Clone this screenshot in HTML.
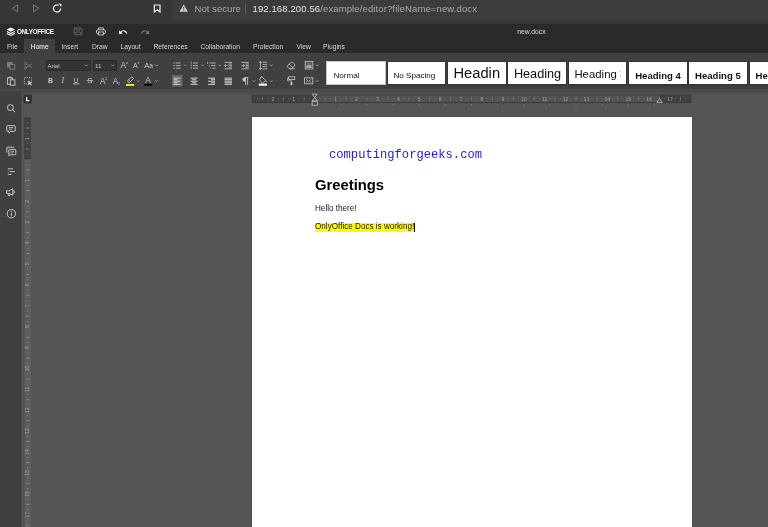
<!DOCTYPE html>
<html><head><meta charset="utf-8"><title>new.docx</title>
<style>
*{box-sizing:border-box;margin:0;padding:0}
html,body{width:768px;height:527px;overflow:hidden;background:#555;font-family:"Liberation Sans",sans-serif;}
#wrap{position:absolute;left:0;top:0;width:768px;height:527px;overflow:hidden;will-change:transform;filter:blur(0.45px)}
.abs{position:absolute}
.t{position:absolute;white-space:nowrap;line-height:1}
#chrome{left:0;top:0;width:768px;height:24px;background:#363637}
#urlbar{left:172px;top:0;width:596px;height:20px;background:#3c3c3d;border-radius:0 0 0 4px}
#title{left:0;top:23.5px;width:768px;height:30px;background:#2a2a2a}
#hometab{left:24px;top:39px;width:31px;height:15px;background:#404040}
#toolbar{left:0;top:53px;width:768px;height:36px;background:#404040}
#tbline{left:0;top:89px;width:768px;height:2.4px;background:#4a4a4a}
#tbsh{left:22px;top:91.4px;width:746px;height:4px;background:linear-gradient(#474747,#555)}
#left{left:0;top:91px;width:22px;height:436px;background:#404040;border-right:1px solid #4a4a4a}
#page{left:251.8px;top:116.7px;width:440px;height:420px;background:#fff;box-shadow:0 0 0 0.5px #444}
.tab{position:absolute;top:43px;font-size:6.7px;color:#d6d6d6;line-height:8px;white-space:nowrap}
.sty{position:absolute;top:61.8px;height:22.3px;width:58px;background:#fff;box-shadow:0 0 0 0.9px #353535,0 1.6px 0 0.2px #393939}
.sty span{position:absolute;white-space:nowrap;color:#111;line-height:1}
.cb{position:absolute;background:#333;border:1px solid #2c2c2c;border-radius:1px}
svg{position:absolute;left:0;top:0;overflow:visible}
</style></head><body>
<div id="wrap">
<div class="abs" id="chrome"></div>
<div class="abs" id="urlbar"></div>
<div class="t" style="left:194.5px;top:3.6px;font-size:9.5px;color:#a8a8aa;letter-spacing:0.05px">Not secure</div>
<div class="abs" style="left:245px;top:4px;width:1px;height:10px;background:#5c5c5e"></div>
<div class="t" style="left:252.5px;top:3.6px;font-size:9.5px;color:#e6e6e6;letter-spacing:0.12px">192.168.200.56<span style="color:#a8a8aa">/example/editor?fileName=new.docx</span></div>
<div class="abs" id="title"></div>
<div class="t" style="left:17px;top:29px;font-size:6.4px;font-weight:bold;color:#f4f4f4;letter-spacing:-0.4px">ONLYOFFICE</div>
<div class="t" style="left:517.3px;top:28.8px;font-size:6.8px;color:#d8d8d8">new.docx</div>
<div class="abs" id="hometab"></div>
<div class="tab" style="left:7px;color:#d6d6d6">File</div>
<div class="tab" style="left:30.8px;color:#fff">Home</div>
<div class="tab" style="left:61.5px;color:#d6d6d6">Insert</div>
<div class="tab" style="left:92px;color:#d6d6d6">Draw</div>
<div class="tab" style="left:120.6px;color:#d6d6d6">Layout</div>
<div class="tab" style="left:153.5px;color:#d6d6d6">References</div>
<div class="tab" style="left:200.5px;color:#d6d6d6">Collaboration</div>
<div class="tab" style="left:253px;color:#d6d6d6">Protection</div>
<div class="tab" style="left:296.5px;color:#d6d6d6">View</div>
<div class="tab" style="left:323px;color:#d6d6d6">Plugins</div>
<div class="abs" id="toolbar"></div>
<div class="abs" id="tbline"></div>
<div class="abs" id="tbsh"></div>
<div class="abs" id="left"></div>
<div class="abs" id="page"></div>
<div class="cb" style="left:45.5px;top:60px;width:45px;height:10.6px"></div>
<div class="t" style="left:47.4px;top:62.9px;font-size:6.1px;color:#c8c8c8">Arial</div>
<div class="cb" style="left:93px;top:60px;width:23.5px;height:10.6px"></div>
<div class="t" style="left:95px;top:62.9px;font-size:6.1px;color:#c8c8c8">11</div>
<div class="abs" style="left:325.7px;top:60.7px;width:60.5px;height:24.6px;background:#fff;border:1px solid #c4c4c4"></div>
<div class="t" style="left:333.40px;top:71.64px;font-size:8.1px;color:#1c1c1c;font-weight:normal;">Normal</div>
<div class="sty" style="left:387.8px;width:57.5px"><div style="position:absolute;left:0;top:0;height:23px;width:52.3px;overflow:hidden"><span style="left:5.60px;top:9.94px;font-size:8.1px;font-weight:normal">No Spacing</span></div></div>
<div class="sty" style="left:448px;width:57.5px"><div style="position:absolute;left:0;top:0;height:23px;width:52.3px;overflow:hidden"><span style="left:5.50px;top:4.36px;font-size:14.7px;font-weight:normal">Heading 1</span></div></div>
<div class="sty" style="left:508.4px;width:57.5px"><div style="position:absolute;left:0;top:0;height:23px;width:52.3px;overflow:hidden"><span style="left:5.50px;top:6.05px;font-size:12.7px;font-weight:normal">Heading 2</span></div></div>
<div class="sty" style="left:568.8px;width:57.5px"><div style="position:absolute;left:0;top:0;height:23px;width:52.3px;overflow:hidden"><span style="left:5.60px;top:7.15px;font-size:11.4px;font-weight:normal">Heading 3</span></div></div>
<div class="sty" style="left:629px;width:57.5px"><div style="position:absolute;left:0;top:0;height:23px;width:52.3px;overflow:hidden"><span style="left:6.20px;top:8.72px;font-size:9.55px;font-weight:bold">Heading 4</span></div></div>
<div class="sty" style="left:689.2px;width:57.5px"><div style="position:absolute;left:0;top:0;height:23px;width:52.3px;overflow:hidden"><span style="left:5.90px;top:8.72px;font-size:9.55px;font-weight:bold">Heading 5</span></div></div>
<div class="sty" style="left:749.5px;width:20px"><div style="position:absolute;left:0;top:0;height:23px;width:20px;overflow:hidden"><span style="left:6.00px;top:8.72px;font-size:9.55px;font-weight:bold">Heading 6</span></div></div>
<div class="t" style="left:329px;top:149.2px;font-family:'Liberation Mono',monospace;font-size:12.15px;color:#2323cc">computingforgeeks.com</div>
<div class="t" style="left:315px;top:178.2px;font-size:14.8px;font-weight:bold;color:#000">Greetings</div>
<div class="t" style="left:315px;top:205.4px;font-size:8.15px;color:#1a1a1a">Hello there!</div>
<div class="abs" style="left:315px;top:222.5px;width:99.3px;height:9.3px;background:#ffff0a"></div>
<div class="t" style="left:315px;top:223.1px;font-size:8.15px;color:#1a1a1a">OnlyOffice Docs is working!</div>
<div class="abs" style="left:414px;top:222.5px;width:1px;height:9.3px;background:#000"></div>
<svg width="768" height="527" viewBox="0 0 768 527" fill="none" stroke-linecap="butt">
<path d="M17.7 4.8 L12.3 8.3 L17.7 11.8 Z" stroke="#808082" stroke-width="0.9"/>
<path d="M33.6 4.8 L39 8.3 L33.6 11.8 Z" stroke="#808082" stroke-width="0.9"/>
<path d="M60.6 8.4 A3.6 3.6 0 1 1 58.8 5.3" stroke="#e4e4e4" stroke-width="1.3"/>
<path d="M58.6 3.6 L61.6 3.9 L61.3 7 Z" fill="#e4e4e4"/>
<path d="M154.4 5 H160 V12 L157.2 9.8 L154.4 12 Z" stroke="#ececec" stroke-width="1.2"/>
<path d="M183.7 4.6 L187.9 11.8 H179.5 Z" fill="#cfcfd0"/>
<path d="M183.7 6.9 V9.6 M183.7 10.2 V11" stroke="#3e3e41" stroke-width="0.9"/>
<path d="M10.8 27.4 L15 29.6 L10.8 31.8 L6.6 29.6 Z" fill="#f4f4f4"/>
<path d="M6.8 31.6 L10.8 33.6 L14.8 31.6 M6.8 33.4 L10.8 35.4 L14.8 33.4" stroke="#f0f0f0" stroke-width="1.15"/>
<g stroke="#6a6a6a" stroke-width="0.8"><path d="M74.2 27.9 H80.5 L82 29.4 V34.8 H74.2 Z"/><path d="M76 27.9 V30 H80 V27.9 M75.8 34.8 V32 H80.4 V34.8"/></g>
<g stroke="#cfcfcf" stroke-width="0.9"><rect x="96.5" y="29.8" width="8.8" height="3.8" rx="1"/><path d="M98.4 29.8 V27.9 H103.4 V29.8"/><rect x="98.4" y="32" width="5" height="2.9" fill="#2a2a2a"/></g>
<path d="M120.6 32.6 C121.5 30.3 125.3 29.6 126.8 33.6" stroke="#f2f2f2" stroke-width="1.2"/><path d="M119 30.3 L119.2 34.2 L122.8 33.4 Z" fill="#f2f2f2"/>
<path d="M147.6 32.6 C146.7 30.3 142.9 29.6 141.4 33.6" stroke="#7a7a7a" stroke-width="1.2"/><path d="M149.2 30.3 L149 34.2 L145.4 33.4 Z" fill="#7a7a7a"/>
<g stroke="#7c7c7c" stroke-width="0.9"><rect x="7.5" y="62.4" width="4.6" height="4.6" fill="#7c7c7c"/><rect x="10" y="64.4" width="4.8" height="4.8" fill="#404040"/></g>
<g stroke="#7c7c7c" stroke-width="0.8"><circle cx="25.4" cy="63.6" r="1.2"/><circle cx="25.4" cy="67.8" r="1.2"/><path d="M26.5 64.2 L32 67.6 M26.5 67.2 L32 63.8"/></g>
<path d="M85.00 64.70 L86.3 66.00 L87.60 64.70" stroke="#b4b4b4" stroke-width="0.75"/>
<path d="M111.30 64.70 L112.6 66.00 L113.90 64.70" stroke="#b4b4b4" stroke-width="0.75"/>
<text x="120.4" y="67.8" font-family="Liberation Sans, sans-serif" font-size="8.4" font-weight="normal" font-style="normal" fill="#c8c8c8" stroke="none" >A</text>
<path d="M125.8 63.4 L127 62 L128.2 63.4 Z" fill="#c8c8c8"/>
<text x="133" y="67.8" font-family="Liberation Sans, sans-serif" font-size="7" font-weight="normal" font-style="normal" fill="#c8c8c8" stroke="none" >A</text>
<path d="M137.4 62.4 L138.5 63.7 L139.6 62.4 Z" fill="#c8c8c8"/>
<text x="144.2" y="67.8" font-family="Liberation Sans, sans-serif" font-size="7.6" font-weight="normal" font-style="normal" fill="#c8c8c8" stroke="none" >A</text>
<text x="149.2" y="67.8" font-family="Liberation Sans, sans-serif" font-size="6.6" font-weight="normal" font-style="normal" fill="#c8c8c8" stroke="none" >a</text>
<path d="M155.30 64.70 L156.6 66.00 L157.90 64.70" stroke="#b4b4b4" stroke-width="0.75"/>
<g stroke="#c8c8c8" stroke-width="0.9"><rect x="7.4" y="78" width="5.2" height="6.2"/><path d="M8.8 78 V77.2 H11.2 V78" /><rect x="10.3" y="79.8" width="4.6" height="5.4" fill="#404040"/></g>
<g stroke="#c8c8c8" stroke-width="0.8"><rect x="24.4" y="77.6" width="6.8" height="6.4" stroke-dasharray="1.2 1"/><path d="M28 80.4 L28.4 85.4 L29.7 84.2 L31.2 85.6 L31.9 84.9 L30.5 83.6 L32 82.8 Z" fill="#c8c8c8" stroke="none"/></g>
<text x="48" y="83.2" font-family="Liberation Sans, sans-serif" font-size="6.9" font-weight="bold" font-style="normal" fill="#c8c8c8" stroke="none" >B</text>
<text x="61.4" y="83.2" font-family="Liberation Serif, serif" font-size="7.8" font-style="italic" fill="#c8c8c8" stroke="none">I</text>
<text x="73.6" y="82.7" font-family="Liberation Sans, sans-serif" font-size="7" font-weight="normal" font-style="normal" fill="#c8c8c8" stroke="none" >U</text>
<path d="M73 83.9 H79.4" stroke="#c8c8c8" stroke-width="0.8"/>
<text x="87.6" y="83.3" font-family="Liberation Sans, sans-serif" font-size="7.4" font-weight="normal" font-style="normal" fill="#c8c8c8" stroke="none" >S</text>
<path d="M86.6 80.7 H93.2" stroke="#c8c8c8" stroke-width="0.8"/>
<text x="100" y="83.8" font-family="Liberation Sans, sans-serif" font-size="8.2" font-weight="normal" font-style="normal" fill="#c8c8c8" stroke="none" >A</text>
<text x="105.3" y="80" font-family="Liberation Sans, sans-serif" font-size="3.6" font-weight="normal" font-style="normal" fill="#c8c8c8" stroke="none" >2</text>
<text x="112.8" y="83.8" font-family="Liberation Sans, sans-serif" font-size="8.2" font-weight="normal" font-style="normal" fill="#c8c8c8" stroke="none" >A</text>
<text x="118.2" y="84.6" font-family="Liberation Sans, sans-serif" font-size="3.6" font-weight="normal" font-style="normal" fill="#c8c8c8" stroke="none" >2</text>
<path d="M128.2 82.4 L127.6 80.6 L131.8 76.8 L133.6 78.4 L129.6 82.4 Z M128.6 80 L130.4 81.6" stroke="#c8c8c8" stroke-width="0.8"/>
<rect x="126" y="83.9" width="8.2" height="2.1" fill="#e6e600"/>
<path d="M136.90 80.40 L138.2 81.70 L139.50 80.40" stroke="#b4b4b4" stroke-width="0.75"/>
<text x="145.3" y="83" font-family="Liberation Sans, sans-serif" font-size="8.4" font-weight="normal" font-style="normal" fill="#c8c8c8" stroke="none" >A</text>
<rect x="144.4" y="83.9" width="7.8" height="2.1" fill="#000"/>
<path d="M155.10 80.40 L156.4 81.70 L157.70 80.40" stroke="#b4b4b4" stroke-width="0.75"/>
<path d="M175.6 63 H180.6 M175.6 65.6 H180.6 M175.6 68.2 H180.6" stroke="#c8c8c8" stroke-width="0.8"/>
<rect x="173.4" y="62.5" width="1.1" height="1" fill="#c8c8c8"/>
<rect x="173.4" y="65.1" width="1.1" height="1" fill="#c8c8c8"/>
<rect x="173.4" y="67.7" width="1.1" height="1" fill="#c8c8c8"/>
<path d="M184.10 64.60 L185.4 65.90 L186.70 64.60" stroke="#b4b4b4" stroke-width="0.75"/>
<path d="M193 63 H198 M193 65.6 H198 M193 68.2 H198" stroke="#c8c8c8" stroke-width="0.8"/>
<path d="M191.2 61.8 V69.4" stroke="#c8c8c8" stroke-width="0.7" stroke-dasharray="1.8 0.8"/>
<path d="M201.30 64.60 L202.6 65.90 L203.90 64.60" stroke="#b4b4b4" stroke-width="0.75"/>
<path d="M209.6 63 H215.6" stroke="#c8c8c8" stroke-width="0.8"/>
<path d="M211.2 65.6 H215.6" stroke="#c8c8c8" stroke-width="0.8"/>
<path d="M212.6 68.2 H215.6" stroke="#c8c8c8" stroke-width="0.8"/>
<path d="M207.6 62 V64 M209.4 65.2 V66.4 M210.8 67.8 V68.8" stroke="#c8c8c8" stroke-width="0.7"/>
<path d="M218.50 64.60 L219.8 65.90 L221.10 64.60" stroke="#b4b4b4" stroke-width="0.75"/>
<g stroke="#c8c8c8" stroke-width="0.8"><path d="M224.6 62.4 H232 M224.6 68.8 H232 M228.6 64 H232 M228.6 65.6 H232 M228.6 67.2 H232"/><path d="M224.4 65.6 H227.6 M226 64.2 L224.5 65.6 L226 67" stroke-width="0.7"/></g>
<g stroke="#c8c8c8" stroke-width="0.8"><path d="M241.4 62.4 H248.8 M241.4 68.8 H248.8 M245.4 64 H248.8 M245.4 65.6 H248.8 M245.4 67.2 H248.8"/><path d="M241.2 65.6 H244.4 M243 64.2 L244.5 65.6 L243 67" stroke-width="0.7"/></g>
<path d="M262.6 62.2 H267.2 M262.6 64.4 H267.2 M262.6 66.6 H267.2 M262.6 68.8 H267.2" stroke="#c8c8c8" stroke-width="0.8"/>
<path d="M260.4 61.4 V69.4 M259 62.8 L260.4 61.2 L261.8 62.8 M259 68 L260.4 69.6 L261.8 68" stroke="#c8c8c8" stroke-width="0.8"/>
<path d="M269.90 64.60 L271.2 65.90 L272.50 64.60" stroke="#b4b4b4" stroke-width="0.75"/>
<path d="M289.4 68.8 L287.6 67 Q287 66.2 287.8 65.4 L291 62.4 Q291.8 61.8 292.6 62.4 L294.6 64.2 Q295.2 65 294.6 65.8 L291.6 68.8 Z M289.4 68.8 H294.8 M289.2 64.2 L292.8 67.6" stroke="#c8c8c8" stroke-width="0.8"/>
<rect x="305.2" y="61.4" width="7.6" height="7.6" stroke="#c8c8c8" stroke-width="0.8"/><rect x="306.4" y="65.2" width="5.2" height="2.8" fill="#b0b0b0"/><rect x="306.4" y="62.6" width="5.2" height="2.6" fill="#6c6c6c"/>
<path d="M315.90 64.60 L317.2 65.90 L318.50 64.60" stroke="#b4b4b4" stroke-width="0.75"/>
<rect x="172" y="75" width="10.6" height="11.4" fill="#666"/>
<rect x="173.6" y="77.6" width="7" height="1.1" fill="#c4c4c4"/>
<rect x="173.6" y="79.14999999999999" width="4" height="1.1" fill="#c4c4c4"/>
<rect x="173.6" y="80.69999999999999" width="7" height="1.1" fill="#c4c4c4"/>
<rect x="173.6" y="82.25" width="4" height="1.1" fill="#c4c4c4"/>
<rect x="173.6" y="83.8" width="7" height="1.1" fill="#c4c4c4"/>
<rect x="190.6" y="77.6" width="7" height="1.1" fill="#c4c4c4"/>
<rect x="192.1" y="79.14999999999999" width="4" height="1.1" fill="#c4c4c4"/>
<rect x="190.6" y="80.69999999999999" width="7" height="1.1" fill="#c4c4c4"/>
<rect x="192.1" y="82.25" width="4" height="1.1" fill="#c4c4c4"/>
<rect x="190.6" y="83.8" width="7" height="1.1" fill="#c4c4c4"/>
<rect x="208" y="77.6" width="7" height="1.1" fill="#c4c4c4"/>
<rect x="211" y="79.14999999999999" width="4" height="1.1" fill="#c4c4c4"/>
<rect x="208" y="80.69999999999999" width="7" height="1.1" fill="#c4c4c4"/>
<rect x="211" y="82.25" width="4" height="1.1" fill="#c4c4c4"/>
<rect x="208" y="83.8" width="7" height="1.1" fill="#c4c4c4"/>
<rect x="224.6" y="77.6" width="7.4" height="1.1" fill="#c4c4c4"/>
<rect x="224.6" y="79.14999999999999" width="7.4" height="1.1" fill="#c4c4c4"/>
<rect x="224.6" y="80.69999999999999" width="7.4" height="1.1" fill="#c4c4c4"/>
<rect x="224.6" y="82.25" width="7.4" height="1.1" fill="#c4c4c4"/>
<rect x="224.6" y="83.8" width="7.4" height="1.1" fill="#c4c4c4"/>
<path d="M245.4 77.6 H248.4 M245.6 77.6 V85 M247.6 77.6 V85" stroke="#c8c8c8" stroke-width="0.8"/><path d="M245.6 77.2 Q242.2 77.4 242.4 79.6 Q242.6 81.8 245.6 81.8 Z" fill="#c8c8c8"/>
<path d="M252.50 80.40 L253.8 81.70 L255.10 80.40" stroke="#b4b4b4" stroke-width="0.75"/>
<path d="M261.6 76.6 L265.8 80.6 L262.6 83 L259.4 80 Z M260.4 77.8 L261.6 76.6" stroke="#c8c8c8" stroke-width="0.8"/><path d="M266.6 80.6 Q267.6 82 266.8 82.6 Q266 82.2 266.6 80.6" fill="#c8c8c8"/>
<rect x="258.8" y="83.6" width="8.2" height="2.1" fill="#fff"/>
<path d="M269.90 80.40 L271.2 81.70 L272.50 80.40" stroke="#b4b4b4" stroke-width="0.75"/>
<rect x="288.6" y="76.8" width="6.2" height="2.6" stroke="#c8c8c8" stroke-width="0.8"/><path d="M288.6 78 H287.6 V80.8 H291.4 V82" stroke="#c8c8c8" stroke-width="0.7"/><rect x="290.6" y="82" width="1.7" height="3.2" fill="#c8c8c8"/>
<rect x="304.6" y="77.8" width="8.2" height="6" stroke="#c8c8c8" stroke-width="0.8"/><path d="M306 79.2 L308.7 81.6 L311.4 79.2 M306 82.6 L307.8 81 M311.4 82.6 L309.6 81" stroke="#c8c8c8" stroke-width="0.7"/>
<path d="M315.90 80.40 L317.2 81.70 L318.50 80.40" stroke="#b4b4b4" stroke-width="0.75"/>
<circle cx="10.4" cy="107.6" r="3" stroke="#d0d0d0" stroke-width="0.9"/><path d="M12.6 109.8 L15 112.2" stroke="#d0d0d0" stroke-width="1"/>
<path d="M7.6 125.6 H14.4 Q15.2 125.6 15.2 126.4 V130.6 Q15.2 131.4 14.4 131.4 H10.6 L9 133.2 V131.4 H7.6 Q6.8 131.4 6.8 130.6 V126.4 Q6.8 125.6 7.6 125.6 Z" stroke="#d0d0d0" stroke-width="0.9"/><path d="M8.8 127.6 H13.2 M8.8 129.2 H12" stroke="#d0d0d0" stroke-width="0.8"/>
<path d="M6.8 152.6 V147.8 Q6.8 147.2 7.4 147.2 H13.4 Q14 147.2 14 147.8" stroke="#d0d0d0" stroke-width="0.9"/><path d="M9.4 149.4 H15.2 Q15.8 149.4 15.8 150 V154.2 Q15.8 154.8 15.2 154.8 H10 L8.8 155.6 V150 Q8.8 149.4 9.4 149.4 Z" stroke="#d0d0d0" stroke-width="0.9"/><path d="M10.6 151.4 H14 M10.6 152.9 H13.2" stroke="#d0d0d0" stroke-width="0.7"/>
<path d="M8.2 168.8 H13 M9.6 171.6 H14.8 M8.2 174.4 H11.4" stroke="#d0d0d0" stroke-width="0.9"/><path d="M8.2 167.8 V175.4" stroke="#d0d0d0" stroke-width="0.6" opacity="0.5"/>
<path d="M6.6 190.8 H8.8 L12.8 188.8 V195.2 L8.8 193.4 H6.6 Z" stroke="#d0d0d0" stroke-width="0.9"/><path d="M8.4 193.6 V195.6 H10 V193.8 M13.8 190.2 Q15 192 13.8 193.8" stroke="#d0d0d0" stroke-width="0.8"/>
<circle cx="11.4" cy="213.7" r="4.1" stroke="#d0d0d0" stroke-width="0.9"/><path d="M11.4 212.6 V216.2 M11.4 210.8 V211.8" stroke="#d0d0d0" stroke-width="0.9"/>
<rect x="23.8" y="95" width="7.6" height="8" fill="#333" stroke="#2a2a2a" stroke-width="0.5"/><path d="M26.6 97 V100.6 H29.4" stroke="#f4f4f4" stroke-width="1.2"/>
<rect x="252" y="95" width="439" height="7.8" fill="#404040"/>
<rect x="314.71" y="95" width="344.93" height="7.8" fill="#525252"/>
<rect x="252" y="95" width="439" height="7.8" stroke="#353535" stroke-width="0.6"/>
<text x="272.90" y="100.5" font-family="Liberation Sans, sans-serif" font-size="5.2" fill="#a0a0a0" stroke="none" text-anchor="middle">2</text>
<text x="293.81" y="100.5" font-family="Liberation Sans, sans-serif" font-size="5.2" fill="#a0a0a0" stroke="none" text-anchor="middle">1</text>
<text x="335.62" y="100.5" font-family="Liberation Sans, sans-serif" font-size="5.2" fill="#a0a0a0" stroke="none" text-anchor="middle">1</text>
<text x="356.52" y="100.5" font-family="Liberation Sans, sans-serif" font-size="5.2" fill="#a0a0a0" stroke="none" text-anchor="middle">2</text>
<text x="377.43" y="100.5" font-family="Liberation Sans, sans-serif" font-size="5.2" fill="#a0a0a0" stroke="none" text-anchor="middle">3</text>
<text x="398.33" y="100.5" font-family="Liberation Sans, sans-serif" font-size="5.2" fill="#a0a0a0" stroke="none" text-anchor="middle">4</text>
<text x="419.24" y="100.5" font-family="Liberation Sans, sans-serif" font-size="5.2" fill="#a0a0a0" stroke="none" text-anchor="middle">5</text>
<text x="440.14" y="100.5" font-family="Liberation Sans, sans-serif" font-size="5.2" fill="#a0a0a0" stroke="none" text-anchor="middle">6</text>
<text x="461.05" y="100.5" font-family="Liberation Sans, sans-serif" font-size="5.2" fill="#a0a0a0" stroke="none" text-anchor="middle">7</text>
<text x="481.95" y="100.5" font-family="Liberation Sans, sans-serif" font-size="5.2" fill="#a0a0a0" stroke="none" text-anchor="middle">8</text>
<text x="502.86" y="100.5" font-family="Liberation Sans, sans-serif" font-size="5.2" fill="#a0a0a0" stroke="none" text-anchor="middle">9</text>
<text x="523.76" y="100.5" font-family="Liberation Sans, sans-serif" font-size="5.2" fill="#a0a0a0" stroke="none" text-anchor="middle">10</text>
<text x="544.67" y="100.5" font-family="Liberation Sans, sans-serif" font-size="5.2" fill="#a0a0a0" stroke="none" text-anchor="middle">11</text>
<text x="565.57" y="100.5" font-family="Liberation Sans, sans-serif" font-size="5.2" fill="#a0a0a0" stroke="none" text-anchor="middle">12</text>
<text x="586.48" y="100.5" font-family="Liberation Sans, sans-serif" font-size="5.2" fill="#a0a0a0" stroke="none" text-anchor="middle">13</text>
<text x="607.38" y="100.5" font-family="Liberation Sans, sans-serif" font-size="5.2" fill="#a0a0a0" stroke="none" text-anchor="middle">14</text>
<text x="628.29" y="100.5" font-family="Liberation Sans, sans-serif" font-size="5.2" fill="#a0a0a0" stroke="none" text-anchor="middle">15</text>
<text x="649.19" y="100.5" font-family="Liberation Sans, sans-serif" font-size="5.2" fill="#a0a0a0" stroke="none" text-anchor="middle">16</text>
<text x="670.10" y="100.5" font-family="Liberation Sans, sans-serif" font-size="5.2" fill="#a0a0a0" stroke="none" text-anchor="middle">17</text>
<path d="M257.23 98.3 V99.3 M262.45 97.2 V100.2 M267.68 98.3 V99.3 M278.13 98.3 V99.3 M283.36 97.2 V100.2 M288.58 98.3 V99.3 M299.04 98.3 V99.3 M304.26 97.2 V100.2 M309.49 98.3 V99.3 M319.94 98.3 V99.3 M325.17 97.2 V100.2 M330.39 98.3 V99.3 M340.85 98.3 V99.3 M346.07 97.2 V100.2 M351.30 98.3 V99.3 M361.75 98.3 V99.3 M366.98 97.2 V100.2 M372.20 98.3 V99.3 M382.65 98.3 V99.3 M387.88 97.2 V100.2 M393.11 98.3 V99.3 M403.56 98.3 V99.3 M408.79 97.2 V100.2 M414.01 98.3 V99.3 M424.46 98.3 V99.3 M429.69 97.2 V100.2 M434.92 98.3 V99.3 M445.37 98.3 V99.3 M450.60 97.2 V100.2 M455.82 98.3 V99.3 M466.27 98.3 V99.3 M471.50 97.2 V100.2 M476.73 98.3 V99.3 M487.18 98.3 V99.3 M492.40 97.2 V100.2 M497.63 98.3 V99.3 M508.08 98.3 V99.3 M513.31 97.2 V100.2 M518.54 98.3 V99.3 M528.99 98.3 V99.3 M534.21 97.2 V100.2 M539.44 98.3 V99.3 M549.89 98.3 V99.3 M555.12 97.2 V100.2 M560.35 98.3 V99.3 M570.80 98.3 V99.3 M576.02 97.2 V100.2 M581.25 98.3 V99.3 M591.70 98.3 V99.3 M596.93 97.2 V100.2 M602.15 98.3 V99.3 M612.61 98.3 V99.3 M617.83 97.2 V100.2 M623.06 98.3 V99.3 M633.51 98.3 V99.3 M638.74 97.2 V100.2 M643.96 98.3 V99.3 M654.42 98.3 V99.3 M659.64 97.2 V100.2 M664.87 98.3 V99.3 M675.32 98.3 V99.3 M680.55 97.2 V100.2 M685.77 98.3 V99.3" stroke="#858585" stroke-width="0.7"/>
<path d="M340.85 104.2 V105.6 M366.98 104.2 V105.6 M393.11 104.2 V105.6 M419.24 104.2 V105.6 M445.37 104.2 V105.6 M471.50 104.2 V105.6 M497.63 104.2 V105.6 M523.76 104.2 V105.6 M549.89 104.2 V105.6 M576.02 104.2 V105.6 M602.15 104.2 V105.6 M628.29 104.2 V105.6 M654.42 104.2 V105.6" stroke="#8a8a8a" stroke-width="0.7"/>
<path d="M312.11 94.2 H317.31 L314.71 97.4 Z M312.11 100.8 H317.31 L314.71 97.6 Z" fill="#4a4a4a" stroke="#cfcfcf" stroke-width="0.7"/>
<rect x="312.11" y="101.2" width="5.2" height="4" fill="#4a4a4a" stroke="#cfcfcf" stroke-width="0.7"/>
<path d="M656.84 102.4 H662.44 L659.64 98.6 Z" fill="#4a4a4a" stroke="#cfcfcf" stroke-width="0.7"/>
<rect x="24.2" y="117" width="6.8" height="410" fill="#404040"/>
<rect x="24.2" y="159.41" width="6.8" height="367.59" fill="#5d5d5d"/>
<text transform="translate(29.4 138.50) rotate(-90)" font-family="Liberation Sans, sans-serif" font-size="5.2" fill="#a4a4a4" stroke="none" text-anchor="middle">1</text>
<text transform="translate(29.4 180.31) rotate(-90)" font-family="Liberation Sans, sans-serif" font-size="5.2" fill="#a4a4a4" stroke="none" text-anchor="middle">1</text>
<text transform="translate(29.4 201.22) rotate(-90)" font-family="Liberation Sans, sans-serif" font-size="5.2" fill="#a4a4a4" stroke="none" text-anchor="middle">2</text>
<text transform="translate(29.4 222.12) rotate(-90)" font-family="Liberation Sans, sans-serif" font-size="5.2" fill="#a4a4a4" stroke="none" text-anchor="middle">3</text>
<text transform="translate(29.4 243.03) rotate(-90)" font-family="Liberation Sans, sans-serif" font-size="5.2" fill="#a4a4a4" stroke="none" text-anchor="middle">4</text>
<text transform="translate(29.4 263.93) rotate(-90)" font-family="Liberation Sans, sans-serif" font-size="5.2" fill="#a4a4a4" stroke="none" text-anchor="middle">5</text>
<text transform="translate(29.4 284.84) rotate(-90)" font-family="Liberation Sans, sans-serif" font-size="5.2" fill="#a4a4a4" stroke="none" text-anchor="middle">6</text>
<text transform="translate(29.4 305.74) rotate(-90)" font-family="Liberation Sans, sans-serif" font-size="5.2" fill="#a4a4a4" stroke="none" text-anchor="middle">7</text>
<text transform="translate(29.4 326.65) rotate(-90)" font-family="Liberation Sans, sans-serif" font-size="5.2" fill="#a4a4a4" stroke="none" text-anchor="middle">8</text>
<text transform="translate(29.4 347.55) rotate(-90)" font-family="Liberation Sans, sans-serif" font-size="5.2" fill="#a4a4a4" stroke="none" text-anchor="middle">9</text>
<text transform="translate(29.4 368.46) rotate(-90)" font-family="Liberation Sans, sans-serif" font-size="5.2" fill="#a4a4a4" stroke="none" text-anchor="middle">10</text>
<text transform="translate(29.4 389.36) rotate(-90)" font-family="Liberation Sans, sans-serif" font-size="5.2" fill="#a4a4a4" stroke="none" text-anchor="middle">11</text>
<text transform="translate(29.4 410.27) rotate(-90)" font-family="Liberation Sans, sans-serif" font-size="5.2" fill="#a4a4a4" stroke="none" text-anchor="middle">12</text>
<text transform="translate(29.4 431.17) rotate(-90)" font-family="Liberation Sans, sans-serif" font-size="5.2" fill="#a4a4a4" stroke="none" text-anchor="middle">13</text>
<text transform="translate(29.4 452.08) rotate(-90)" font-family="Liberation Sans, sans-serif" font-size="5.2" fill="#a4a4a4" stroke="none" text-anchor="middle">14</text>
<text transform="translate(29.4 472.98) rotate(-90)" font-family="Liberation Sans, sans-serif" font-size="5.2" fill="#a4a4a4" stroke="none" text-anchor="middle">15</text>
<text transform="translate(29.4 493.89) rotate(-90)" font-family="Liberation Sans, sans-serif" font-size="5.2" fill="#a4a4a4" stroke="none" text-anchor="middle">16</text>
<text transform="translate(29.4 514.79) rotate(-90)" font-family="Liberation Sans, sans-serif" font-size="5.2" fill="#a4a4a4" stroke="none" text-anchor="middle">17</text>
<path d="M27.2 122.83 H28.2 M26.2 128.05 H29.2 M27.2 133.28 H28.2 M27.2 143.73 H28.2 M26.2 148.96 H29.2 M27.2 154.18 H28.2 M27.2 164.64 H28.2 M26.2 169.86 H29.2 M27.2 175.09 H28.2 M27.2 185.54 H28.2 M26.2 190.77 H29.2 M27.2 195.99 H28.2 M27.2 206.45 H28.2 M26.2 211.67 H29.2 M27.2 216.90 H28.2 M27.2 227.35 H28.2 M26.2 232.58 H29.2 M27.2 237.80 H28.2 M27.2 248.25 H28.2 M26.2 253.48 H29.2 M27.2 258.71 H28.2 M27.2 269.16 H28.2 M26.2 274.39 H29.2 M27.2 279.61 H28.2 M27.2 290.06 H28.2 M26.2 295.29 H29.2 M27.2 300.52 H28.2 M27.2 310.97 H28.2 M26.2 316.20 H29.2 M27.2 321.42 H28.2 M27.2 331.87 H28.2 M26.2 337.10 H29.2 M27.2 342.33 H28.2 M27.2 352.78 H28.2 M26.2 358.00 H29.2 M27.2 363.23 H28.2 M27.2 373.68 H28.2 M26.2 378.91 H29.2 M27.2 384.14 H28.2 M27.2 394.59 H28.2 M26.2 399.81 H29.2 M27.2 405.04 H28.2 M27.2 415.49 H28.2 M26.2 420.72 H29.2 M27.2 425.95 H28.2 M27.2 436.40 H28.2 M26.2 441.62 H29.2 M27.2 446.85 H28.2 M27.2 457.30 H28.2 M26.2 462.53 H29.2 M27.2 467.75 H28.2 M27.2 478.21 H28.2 M26.2 483.43 H29.2 M27.2 488.66 H28.2 M27.2 499.11 H28.2 M26.2 504.34 H29.2 M27.2 509.56 H28.2 M27.2 520.02 H28.2 M26.2 525.24 H29.2" stroke="#9c9c9c" stroke-width="0.7"/>
</svg>
</div></body></html>
